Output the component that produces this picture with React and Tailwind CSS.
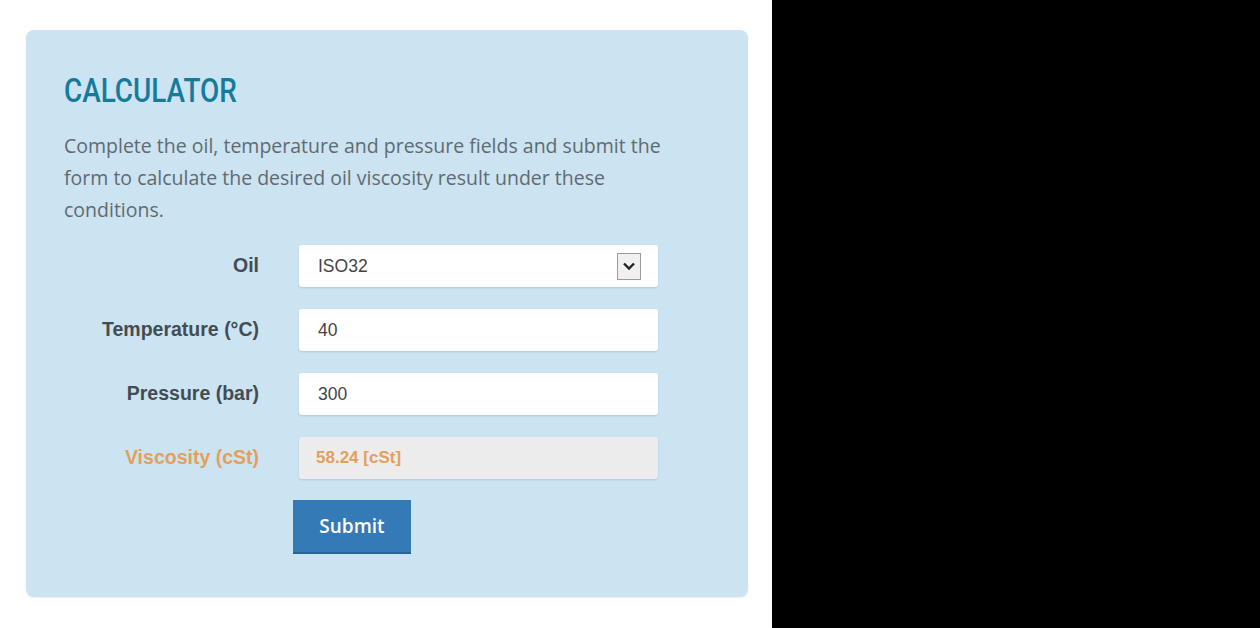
import React from "react";

const rows = [
  { label: "Oil", value: "ISO32", select: true },
  { label: "Temperature (°C)", value: "40" },
  { label: "Pressure (bar)", value: "300" },
];

const App = () => {
  return (
    <div className="flex h-[628px] w-[1260px] bg-black">
      <div className="h-full w-[772px] bg-white pl-[26px] pt-[30px]">
        <div className="h-[567px] w-[722px] rounded-lg bg-[#cce3f1] pl-[38px] pt-[41px] shadow-[0_1px_2px_rgba(0,0,0,0.08)]">
          <h1 className="origin-left scale-x-[0.82] font-['Roboto',sans-serif] text-[34px] font-medium leading-[38px] text-[#157b9c]">
            CALCULATOR
          </h1>
          <p className="mt-[21px] w-[612px] font-['Open_Sans',sans-serif] text-[19.5px] leading-[32px] text-[#616a70]">
            Complete the oil, temperature and pressure fields and submit the
            form to calculate the desired oil viscosity result under these
            conditions.
          </p>

          <form className="mt-[19px] flex flex-col gap-[22px] font-['Liberation_Sans',sans-serif]">
            {rows.map((row) => (
              <div key={row.label} className="flex items-center">
                <label className="w-[195px] text-right text-[19.5px] font-bold text-[#434c53]">
                  {row.label}
                </label>
                <div className="ml-[40px] flex h-[42px] w-[359px] items-center justify-between rounded-[3px] bg-white pl-[19px] pr-[17px] text-[17.5px] text-[#444] shadow-[0_1px_2px_rgba(0,0,0,0.12)]">
                  <span>{row.value}</span>
                  {row.select && (
                    <span className="flex h-[27px] w-[24px] items-center justify-center border border-[#9a9a9a] bg-[#f0f0f0]">
                      <svg width="14" height="10" viewBox="0 0 14 10">
                        <path
                          d="M2 2.5 L7 7.5 L12 2.5"
                          fill="none"
                          stroke="#222"
                          strokeWidth="2.4"
                        />
                      </svg>
                    </span>
                  )}
                </div>
              </div>
            ))}
            <div className="flex items-center">
              <label className="w-[195px] text-right text-[19.5px] font-bold text-[#e3a05c]">
                Viscosity (cSt)
              </label>
              <div className="ml-[40px] flex h-[42px] w-[359px] items-center rounded-[3px] bg-[#ececec] pl-[17px] text-[17px] font-bold text-[#e3a05c] shadow-[0_1px_2px_rgba(0,0,0,0.12)]">
                58.24 [cSt]
              </div>
            </div>
            <div className="flex">
              <button
                type="button"
                className="ml-[229px] mt-[-1px] h-[54px] w-[118px] border-b-2 border-[#2a6496] bg-[#337ab7] font-['Open_Sans',sans-serif] text-[19px] font-semibold text-white"
              >
                Submit
              </button>
            </div>
          </form>
        </div>
      </div>
    </div>
  );
};

export default App;
